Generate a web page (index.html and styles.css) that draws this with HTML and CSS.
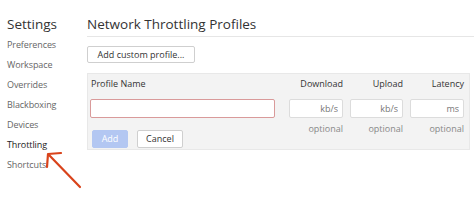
FILE: index.html
```html
<!DOCTYPE html>
<html lang="en">
<head>
    <meta charset="UTF-8">
    <title>Settings - Throttling</title>
    <link rel="stylesheet" href="styles.css">
</head>
<body>
    <div class="page">
        <!-- Sidebar -->
        <aside class="sidebar">
            <h1 class="sidebar-title">Settings</h1>
            <ul class="nav-list">
                <li>Preferences</li>
                <li>Workspace</li>
                <li>Overrides</li>
                <li>Blackboxing</li>
                <li>Devices</li>
                <li class="selected">Throttling</li>
                <li>Shortcuts</li>
            </ul>
        </aside>

        <!-- Main -->
        <main class="content">
            <h2 class="content-title">Network Throttling Profiles</h2>
            <button class="btn add-profile">Add custom profile...</button>

            <div class="editor">
                <div class="label left">Profile Name</div>
                <div class="label">Download</div>
                <div class="label">Upload</div>
                <div class="label">Latency</div>

                <div><input class="field name-field" type="text"></div>
                <div><input class="field num-field" type="text" placeholder="kb/s"></div>
                <div><input class="field num-field" type="text" placeholder="kb/s"></div>
                <div><input class="field num-field" type="text" placeholder="ms"></div>

                <div class="actions">
                    <button class="btn btn-primary" disabled>Add</button>
                    <button class="btn">Cancel</button>
                </div>
                <div class="hint">optional</div>
                <div class="hint">optional</div>
                <div class="hint">optional</div>
            </div>
        </main>
    </div>

    <svg class="arrow" width="90" height="200" viewBox="0 0 90 200">
        <line x1="80" y1="187" x2="49" y2="155" stroke="#d9431b" stroke-width="2.2" stroke-linecap="round"/>
        <polyline points="61,153 48,154 47,167" fill="none" stroke="#d9431b" stroke-width="2.2" stroke-linecap="round" stroke-linejoin="round"/>
    </svg>
</body>
</html>
```

FILE: styles.css
```css
body {
    margin: 0;
    padding: 0;
    background: #fff;
    font-family: "Open Sans", "Noto Sans", sans-serif;
    color: #333;
}

.page {
    display: flex;
}

/* Sidebar */
.sidebar {
    width: 80px;
    padding-left: 7px;
}

.sidebar-title {
    margin: 14px 0 0;
    font-size: 13.5px;
    font-weight: normal;
    line-height: 20px;
    color: #333;
}

.nav-list {
    list-style: none;
    margin: 1px 0 0;
    padding: 0;
}

.nav-list li {
    font-size: 9px;
    line-height: 20px;
    color: #666;
    letter-spacing: -0.1px;
}

.nav-list li.selected {
    color: #222;
}

/* Main */
.content {
    flex: 1;
}

.content-title {
    margin: 0;
    padding-top: 14px;
    height: 22px;
    border-bottom: 1px solid #e6e6e6;
    font-size: 13.5px;
    font-weight: normal;
    line-height: 20px;
    color: #333;
}

.btn {
    font-family: inherit;
    font-size: 9px;
    color: #333;
    background: #fff;
    border: 1px solid #cfcfcf;
    border-radius: 2px;
    height: 18px;
    padding: 0 8px;
    line-height: 16px;
}

.add-profile {
    display: block;
    margin-top: 9px;
    width: 108px;
    height: 17px;
    padding: 0;
}

.editor {
    margin-top: 10px;
    width: 379px;
    height: 72px;
    padding: 3px 0 0 2px;
    background: #f3f3f3;
    border: 1px solid #e8e8e8;
    display: grid;
    grid-template-columns: 192px 54px 53px 54px;
    column-gap: 7px;
    align-items: start;
}

.label {
    font-size: 9px;
    line-height: 14px;
    text-align: right;
    color: #333;
    margin-bottom: 7px;
}

.label.left {
    text-align: left;
    padding-left: 1px;
}

.field {
    display: block;
    box-sizing: border-box;
    height: 19px;
    margin: 0;
    padding: 0 4px;
    font-family: inherit;
    font-size: 9px;
    text-align: right;
    background: #fff;
    border: 1px solid #dcdcdc;
    border-radius: 2px;
}

.field::placeholder {
    color: #777;
}

.name-field {
    width: 185px;
    border-color: #d99a9a;
    text-align: left;
}

.num-field {
    width: 100%;
}

.actions {
    display: flex;
    gap: 9px;
    margin-top: 10px;
    padding-left: 2px;
}

.actions .btn {
    width: 36px;
    padding: 0;
}

.actions .btn + .btn {
    width: 46px;
}

.btn-primary,
.btn-primary:disabled {
    background: #b3c7f2;
    border-color: #b3c7f2;
    color: #fff;
}

.hint {
    font-size: 9px;
    line-height: 12px;
    text-align: right;
    color: #888;
    margin-top: 3px;
}

/* Annotation arrow over the page */
.arrow {
    position: absolute;
    left: 0;
    top: 0;
}
```
